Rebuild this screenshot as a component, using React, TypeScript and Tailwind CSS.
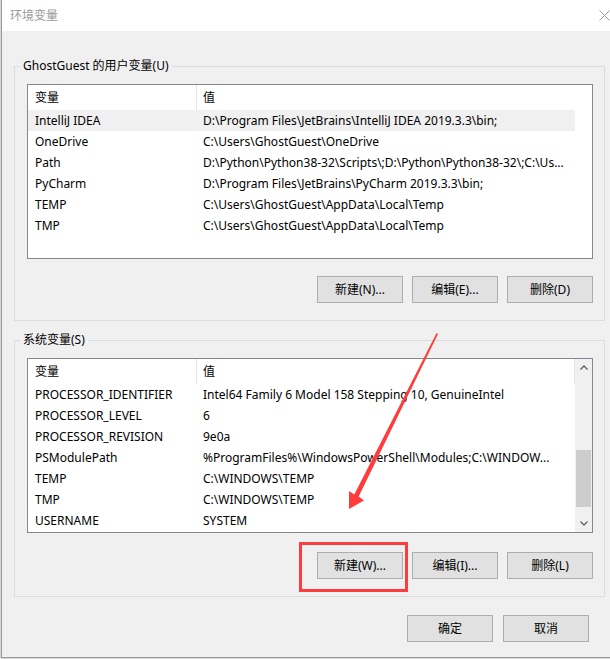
import React from 'react';

type Row = { name: string; value: string };

const userVars: Row[] = [
  { name: 'IntelliJ IDEA', value: 'D:\\Program Files\\JetBrains\\IntelliJ IDEA 2019.3.3\\bin;' },
  { name: 'OneDrive', value: 'C:\\Users\\GhostGuest\\OneDrive' },
  { name: 'Path', value: 'D:\\Python\\Python38-32\\Scripts\\;D:\\Python\\Python38-32\\;C:\\Us...' },
  { name: 'PyCharm', value: 'D:\\Program Files\\JetBrains\\PyCharm 2019.3.3\\bin;' },
  { name: 'TEMP', value: 'C:\\Users\\GhostGuest\\AppData\\Local\\Temp' },
  { name: 'TMP', value: 'C:\\Users\\GhostGuest\\AppData\\Local\\Temp' },
];

const systemVars: Row[] = [
  { name: 'PROCESSOR_IDENTIFIER', value: 'Intel64 Family 6 Model 158 Stepping 10, GenuineIntel' },
  { name: 'PROCESSOR_LEVEL', value: '6' },
  { name: 'PROCESSOR_REVISION', value: '9e0a' },
  { name: 'PSModulePath', value: '%ProgramFiles%\\WindowsPowerShell\\Modules;C:\\WINDOW...' },
  { name: 'TEMP', value: 'C:\\WINDOWS\\TEMP' },
  { name: 'TMP', value: 'C:\\WINDOWS\\TEMP' },
  { name: 'USERNAME', value: 'SYSTEM' },
];

function WinButton({ label }: { label: string }) {
  return (
    <button className="w-[86px] h-[27px] bg-[#e1e1e1] border border-[#adadad] text-[12px] text-black flex items-center justify-center">
      {label}
    </button>
  );
}

function VarTable({ rows, selected, scrollbar }: { rows: Row[]; selected?: number; scrollbar?: boolean }) {
  return (
    <div className="h-[175px] border border-[#828790] bg-white flex overflow-hidden">
      <div className="w-[547px] flex flex-col">
        <div className="h-[25px] flex shrink-0">
          <div className="w-[169px] border-r border-[#e5e5e5] pl-[7px] flex items-center">变量</div>
          <div className={`flex-1 pl-[6px] flex items-center ${scrollbar ? 'border-r border-[#e5e5e5]' : ''}`}>值</div>
        </div>
        {rows.map((r, i) => (
          <div key={r.name + i} className={`h-[21px] flex shrink-0 items-center ${i === selected ? 'bg-[#f0f0f0]' : ''}`}>
            <div className="w-[169px] pl-[7px] whitespace-nowrap overflow-hidden">{r.name}</div>
            <div className="flex-1 pl-[6px] whitespace-nowrap overflow-hidden">{r.value}</div>
          </div>
        ))}
      </div>
      {scrollbar && (
        <div className="w-[17px] bg-[#f0f0f0] flex flex-col">
          <div className="h-[17px] flex items-center justify-center">
            <svg width="8" height="5" viewBox="0 0 8 5">
              <path d="M0.5 4.5 L4 1 L7.5 4.5" fill="none" stroke="#606060" strokeWidth="1.3" />
            </svg>
          </div>
          <div className="flex-1 pt-[74px]">
            <div className="mx-px h-[57px] bg-[#cdcdcd]" />
          </div>
          <div className="h-[17px] flex items-center justify-center">
            <svg width="8" height="5" viewBox="0 0 8 5">
              <path d="M0.5 0.5 L4 4 L7.5 0.5" fill="none" stroke="#606060" strokeWidth="1.3" />
            </svg>
          </div>
        </div>
      )}
    </div>
  );
}

function GroupBox({ title, children }: { title: string; children: React.ReactNode }) {
  return (
    <fieldset className="ml-[12px] w-[591px] border border-[#dcdcdc] min-w-0">
      <legend className="ml-[5px] px-[3px] leading-[18px] text-[12px]">{title}</legend>
      <div className="pl-[12px] pr-[11px] pb-[17px]">{children}</div>
    </fieldset>
  );
}

export default function App() {
  return (
    <div
      className="relative w-[610px] h-[659px] bg-[#d8d8d8] pl-px overflow-hidden text-[12px] text-black"
      style={{ fontFamily: '"Noto Sans", "Noto Sans CJK SC", sans-serif' }}
    >
      <div className="h-[658px] border-l border-b border-[#9a9a9a] bg-[#f0f0f0] flex flex-col">
        <div className="h-[31px] bg-white flex items-center justify-between pl-[8px] shrink-0">
          <span className="text-[#999999] text-[12px]">环境变量</span>
          <svg width="11" height="11" viewBox="0 0 11 11">
            <path d="M0.5 0.5 L10.5 10.5 M10.5 0.5 L0.5 10.5" stroke="#9a9a9a" strokeWidth="1" />
          </svg>
        </div>

        <div className="mt-[26px]">
          <GroupBox title="GhostGuest 的用户变量(U)">
            <div className="mt-[9px]">
              <VarTable rows={userVars} selected={0} />
            </div>
            <div className="mt-[17px] flex justify-end gap-[9px]">
              <WinButton label="新建(N)..." />
              <WinButton label="编辑(E)..." />
              <WinButton label="删除(D)" />
            </div>
          </GroupBox>
        </div>

        <div className="mt-[10px]">
          <GroupBox title="系统变量(S)">
            <div className="mt-[9px]">
              <VarTable rows={systemVars} scrollbar />
            </div>
            <div className="mt-[19px] flex justify-end gap-[9px]">
              <WinButton label="新建(W)..." />
              <WinButton label="编辑(I)..." />
              <WinButton label="删除(L)" />
            </div>
          </GroupBox>
        </div>

        <div className="mt-[18px] flex justify-end gap-[10px] pr-[21px]">
          <WinButton label="确定" />
          <WinButton label="取消" />
        </div>
      </div>

      <svg className="absolute inset-0 pointer-events-none" width="610" height="659" viewBox="0 0 610 659">
        <rect x="300.5" y="543.5" width="106" height="47" fill="none" stroke="#ff3c3c" strokeWidth="3" />
        <polygon
          points="436.6,333 438,334 358.7,496.6 364,500.5 349,509 349,491 354.3,494.4"
          fill="#ff3c3c"
        />
      </svg>
    </div>
  );
}
